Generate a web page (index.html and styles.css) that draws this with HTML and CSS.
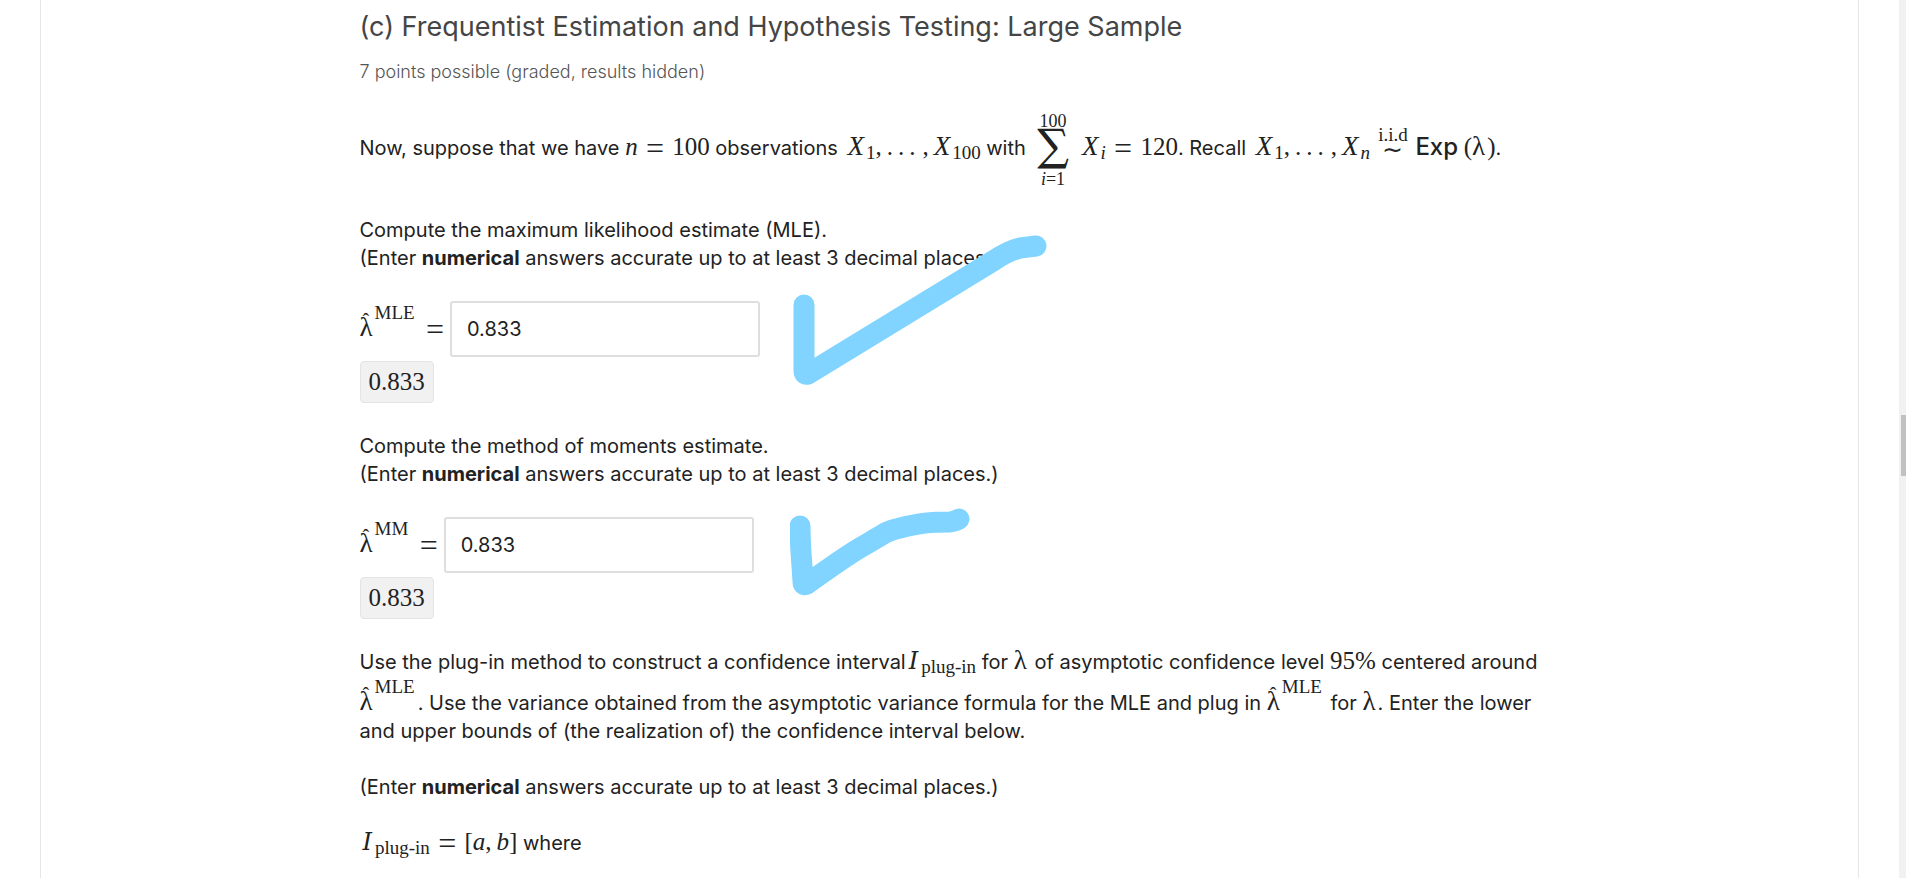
FILE: index.html
```html
<!DOCTYPE html>
<html lang="en">
<head>
    <meta charset="UTF-8">
    <meta name="viewport" content="width=device-width, initial-scale=1.0">
    <title>Frequentist Estimation and Hypothesis Testing</title>
    <link rel="stylesheet" href="styles.css">
</head>
<body>
    <div class="page">
        <main class="card">
            <div class="problem">
                <h3 class="title">(c) Frequentist Estimation and Hypothesis Testing: Large Sample</h3>
                <div class="progress">7 points possible (graded, results hidden)</div>

                <p class="intro">Now, suppose that we have
                    <span class="math"><i>n</i> <span class="rel">=</span> 100</span> observations
                    <span class="math"><i class="big">X</i><sub>1</sub>,<span class="dots">...</span>,<i class="big next">X</i><sub>100</sub></span>&nbsp;with
                    <span class="sum"><span class="limit">100</span><span class="sigma">∑</span><span class="limit"><i>i</i>=1</span></span>
                    <span class="math"><i class="big">X</i><sub><i>i</i></sub> <span class="rel">=</span> 120</span>. Recall
                    <span class="math"><i class="big">X</i><sub>1</sub>,<span class="dots">...</span>,<i class="big next">X</i><sub><i>n</i></sub>
                    <span class="iid"><span class="over">i.i.d</span><span class="tilde">∼</span></span></span>
                    <span class="exp">Exp</span> <span class="math">(<span class="lambda">λ</span>)</span>.</p>

                <!-- MLE -->
                <section class="question">
                    <p>Compute the maximum likelihood estimate (MLE).<br>
                    (Enter <b>numerical</b> answers accurate up to at least 3 decimal places.)</p>
                    <div class="answer">
                        <label class="math" for="mle"><span class="hat">λ</span><sup>MLE</sup> <span class="rel">=</span></label>
                        <input type="text" id="mle" value="0.833">
                    </div>
                    <div class="preview">0.833</div>
                    <svg class="tick" width="260" height="170" viewBox="0 0 260 170" aria-hidden="true">
                        <path d="M14 74 V140 Q14 144 18 143 L203 30 Q218 20 230 17 L246 15"/>
                    </svg>
                </section>

                <!-- method of moments -->
                <section class="question">
                    <p>Compute the method of moments estimate.<br>
                    (Enter <b>numerical</b> answers accurate up to at least 3 decimal places.)</p>
                    <div class="answer">
                        <label class="math" for="mm"><span class="hat">λ</span><sup>MM</sup> <span class="rel">=</span></label>
                        <input type="text" id="mm" value="0.833">
                    </div>
                    <div class="preview">0.833</div>
                    <svg class="tick" width="260" height="170" viewBox="0 0 260 170" aria-hidden="true">
                        <path d="M10 79 C10 100 12 115 13 135 Q13 139 17 137 C45 117 60 106 75 98 C94 87 96 84 110 81 C130 76 140 75 160 75 Q166 74 169 72"/>
                    </svg>
                </section>

                <!-- confidence interval -->
                <section class="question">
                    <p>Use the plug-in method to construct a confidence interval<span class="math"><i class="script">I</i><sub>plug-in</sub></span>&nbsp;for <span class="math"><span class="lambda">λ</span></span> of asymptotic confidence level <span class="math">95%</span> centered around
                    <span class="math"><span class="hat">λ</span><sup>MLE</sup></span>. Use the variance obtained from the asymptotic variance formula for the MLE and plug in <span class="math"><span class="hat">λ</span><sup>MLE</sup></span> for <span class="math"><span class="lambda">λ</span></span>. Enter the lower and upper bounds of (the realization of) the confidence interval below.</p>
                    <p>(Enter <b>numerical</b> answers accurate up to at least 3 decimal places.)</p>
                    <p><span class="math"><i class="script">I</i><sub>plug-in</sub> <span class="rel">=</span> [<i>a</i>,<i class="next">b</i>]</span> where</p>
                </section>
            </div>
        </main>
        <div class="scrollbar"><div class="thumb"></div></div>
    </div>
</body>
</html>
```

FILE: styles.css
```css
* {
    box-sizing: border-box;
}
body {
    margin: 0;
    background: #fff;
    color: #222;
    font-family: Inter, "Liberation Sans", sans-serif;
    font-size: 20px;
    line-height: 28px;
}
.page {
    display: flex;
    height: 100vh;
    overflow: hidden;
}
.card {
    flex: 1;
    margin: 0 40px;
    border: 1px solid #e7e7e7;
    border-width: 0 1px;
}
.problem {
    max-width: 1180px;
    margin: 0 auto;
    padding-top: 9px;
}
.title {
    margin: 0;
    color: #454545;
    font-size: 27px;
    font-weight: 400;
    line-height: 36px;
}
.progress {
    margin-top: 15px;
    color: #555;
    font-size: 18px;
    font-weight: 300;
    line-height: 24px;
}
p {
    margin: 0 0 28px;
}
.intro {
    margin-top: 28px;
}

/* math */
.math,
.sum {
    font-family: "Liberation Serif", serif;
    font-size: 25px;
    line-height: 24px;
    white-space: nowrap;
}
sub,
sup {
    font-size: 19px;
}
sub {
    line-height: 0;
    vertical-align: -4px;
}
sup {
    margin-right: 3px;
    line-height: 22px;
    vertical-align: 17px;
}
.rel {
    margin: 0 2px;
    font-size: 32px;
    line-height: 0;
    vertical-align: -4px;
}
.big {
    margin: 0 2px 0 4px;
    font-size: 27px;
}
.dots {
    margin: 0 2px 0 5px;
    letter-spacing: 5px;
}
.next {
    margin-left: 5px;
}
.sum {
    display: inline-flex;
    flex-direction: column;
    align-items: center;
    margin: 0 1px 0 3px;
    vertical-align: middle;
}
.limit {
    font-size: 18px;
    line-height: 18px;
}
.sigma {
    padding-bottom: 3px;
    font-family: "DejaVu Math TeX Gyre", "DejaVu Serif", serif;
    font-size: 38px;
    line-height: 37px;
}
.iid {
    display: inline-flex;
    flex-direction: column;
    align-items: center;
    margin: 0 2px;
    vertical-align: 14px;
}
.over {
    font-size: 19px;
    line-height: 14px;
}
.tilde {
    line-height: 16px;
}
.exp {
    font-size: 24px;
    font-weight: 500;
}
.lambda,
.hat {
    margin-right: 2px;
    font-size: 27px;
}
.hat {
    position: relative;
}
.hat::before {
    content: "ˆ";
    position: absolute;
    left: 3px;
    top: -3px;
    font-size: 20px;
}
.script {
    margin: 0 3px;
    font-family: "DejaVu Serif", serif;
    font-size: 24px;
    line-height: 0;
}

/* answers */
.question {
    position: relative;
    margin: 0 -8px 29px 0;
}
.answer {
    display: flex;
    align-items: center;
    gap: 4px;
    padding-top: 1px;
}
.answer label {
    padding-bottom: 6px;
}
.answer sup {
    line-height: 0;
}
input[type="text"] {
    width: 310px;
    height: 56px;
    padding: 0 15px;
    border: 2px solid #dedede;
    border-radius: 3px;
    background: #fff;
    color: #222;
    font: inherit;
}
.preview {
    display: inline-block;
    margin-top: 4px;
    padding: 6px 8px;
    border: 1px solid #e4e4e4;
    border-radius: 4px;
    background: #f1f1f1;
    font-family: "Liberation Serif", serif;
    font-size: 25px;
}
.tick {
    position: absolute;
    left: 430px;
    top: 15px;
    fill: none;
    stroke: #80d4ff;
    stroke-width: 21;
    stroke-linecap: round;
    stroke-linejoin: round;
}

.scrollbar {
    display: flex;
    flex-direction: column;
    width: 7px;
    background: #f1f1f1;
}
.thumb {
    height: 7%;
    margin: 415px 0 0 2px;
    background: #c1c1c1;
}
```
